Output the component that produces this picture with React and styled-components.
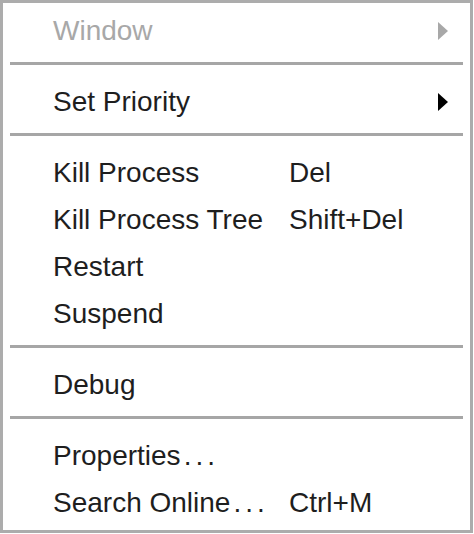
import { styled, createGlobalStyle } from "styled-components";

const GlobalStyle = createGlobalStyle`
  html, body {
    margin: 0;
    padding: 0;
    background: #ffffff;
  }
`;

export default function App() {
  return (
    <>
      <GlobalStyle />
      <Menu>
        <Item $disabled>
          <Label>Window</Label>
          <Shortcut />
          <Arrow $disabled />
        </Item>
        <Separator />
        <Item>
          <Label>Set Priority</Label>
          <Shortcut />
          <Arrow />
        </Item>
        <Separator />
        <Item>
          <Label>Kill Process</Label>
          <Shortcut>Del</Shortcut>
        </Item>
        <Item>
          <Label>Kill Process Tree</Label>
          <Shortcut>Shift+Del</Shortcut>
        </Item>
        <Item>
          <Label>Restart</Label>
        </Item>
        <Item>
          <Label>Suspend</Label>
        </Item>
        <Separator />
        <Item>
          <Label>Debug</Label>
        </Item>
        <Separator />
        <Item>
          <Label>
            Properties<Dots>...</Dots>
          </Label>
        </Item>
        <Item>
          <Label>
            Search Online<Dots>...</Dots>
          </Label>
          <Shortcut>Ctrl+M</Shortcut>
        </Item>
      </Menu>
    </>
  );
}

function Arrow({ $disabled }) {
  return (
    <ArrowIcon viewBox="0 0 10 18" $disabled={$disabled}>
      <path d="M0 0 L10 9 L0 18 Z" />
    </ArrowIcon>
  );
}

const Menu = styled.div`
  box-sizing: border-box;
  width: 473px;
  height: 533px;
  padding: 4px 0;
  border: 3px solid #acacac;
  background: #ffffff;
  display: flex;
  flex-direction: column;
  font-family: "Liberation Sans", Arial, sans-serif;
  font-size: 28px;
  color: #1e1e1e;
`;

const Item = styled.div`
  height: 47px;
  line-height: 47px;
  display: grid;
  grid-template-columns: 236px 1fr auto;
  align-items: center;
  padding: 0 22px 0 50px;
  color: ${(p) => (p.$disabled ? "#a8a8a8" : "#1e1e1e")};
  white-space: nowrap;
`;

const Label = styled.span``;

const Dots = styled.span`
  margin-left: 3px;
  letter-spacing: 4px;
`;

const Shortcut = styled.span``;

const ArrowIcon = styled.svg`
  width: 10px;
  height: 18px;
  fill: ${(p) => (p.$disabled ? "#a8a8a8" : "#000000")};
`;

const Separator = styled.div`
  height: 24px;
  padding: 0 7px;
  box-sizing: border-box;
  &::before {
    content: "";
    display: block;
    margin-top: 8px;
    height: 3px;
    background: #a6a6a6;
  }
`;
